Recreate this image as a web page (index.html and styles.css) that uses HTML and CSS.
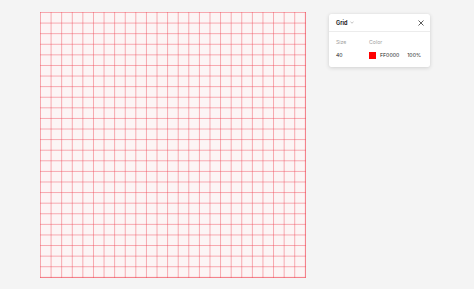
FILE: index.html
```html
<!DOCTYPE html>
<html>
<head>
<meta charset="utf-8">
<link rel="stylesheet" href="styles.css">
</head>
<body>
<div class="stage">
  <div class="frame"></div>
  <div class="panel">
    <div class="panel-head">
      <span class="title">Grid</span>
      <svg class="chev" width="4" height="3" viewBox="0 0 4 3"><path d="M0.5 0.8 L2 2.2 L3.5 0.8" fill="none" stroke="#999" stroke-width="0.6"/></svg>
      <span class="spacer"></span>
      <svg class="close" width="6" height="6" viewBox="0 0 6 6"><path d="M0.5 0.5 L5.5 5.5 M5.5 0.5 L0.5 5.5" stroke="#333" stroke-width="0.8"/></svg>
    </div>
    <div class="panel-body">
      <div class="col size-col">
        <div class="label">Size</div>
        <div class="value">40</div>
      </div>
      <div class="col color-col">
        <div class="label">Color</div>
        <div class="value color-row">
          <span class="swatch"></span>
          <span class="hex">FF0000</span>
          <span class="spacer"></span>
          <span class="pct">100%</span>
        </div>
      </div>
    </div>
  </div>
</div>
</body>
</html>
```

FILE: styles.css
```css
html, body {
  margin: 0;
  padding: 0;
  background: #f4f4f4;
  font-family: Inter, "Liberation Sans", sans-serif;
}
.stage {
  display: flex;
  align-items: flex-start;
  padding: 12px 0 0 40px;
  gap: 23px;
}
.frame {
  width: 266px;
  height: 266px;
  box-sizing: border-box;
  background-color: #fcf5f5;
  background-image:
    linear-gradient(to right, rgba(240, 70, 85, 0.45) 1px, transparent 1px),
    linear-gradient(to bottom, rgba(240, 70, 85, 0.45) 1px, transparent 1px);
  background-size: 10.6px 10.6px;
  border-right: 1px solid rgba(240, 70, 85, 0.45);
  border-bottom: 1px solid rgba(240, 70, 85, 0.45);
}
.panel {
  margin-top: 2px;
  width: 101px;
  background: #fff;
  border-radius: 2px;
  box-shadow: 0 1px 4px rgba(0, 0, 0, 0.14), 0 0 1px rgba(0, 0, 0, 0.1);
}
.panel-head {
  display: flex;
  align-items: center;
  height: 17px;
  padding: 0 6px 0 7px;
  border-bottom: 1px solid #ececec;
}
.title {
  font-size: 5.5px;
  font-weight: 700;
  color: #222;
}
.chev {
  margin-left: 3px;
}
.spacer {
  flex: 1;
}
.panel-body {
  display: flex;
  padding: 7px 9px 8px 7px;
}
.col {
  display: flex;
  flex-direction: column;
  gap: 6px;
}
.size-col {
  width: 33px;
}
.color-col {
  flex: 1;
}
.label {
  font-size: 5.2px;
  color: #a0a0a0;
  height: 7px;
  line-height: 7px;
}
.value {
  font-size: 5.2px;
  color: #222;
  height: 7px;
  line-height: 7px;
}
.color-row {
  display: flex;
  align-items: center;
}
.swatch {
  width: 7px;
  height: 7px;
  background: #ff0000;
  margin-right: 4px;
}
```
